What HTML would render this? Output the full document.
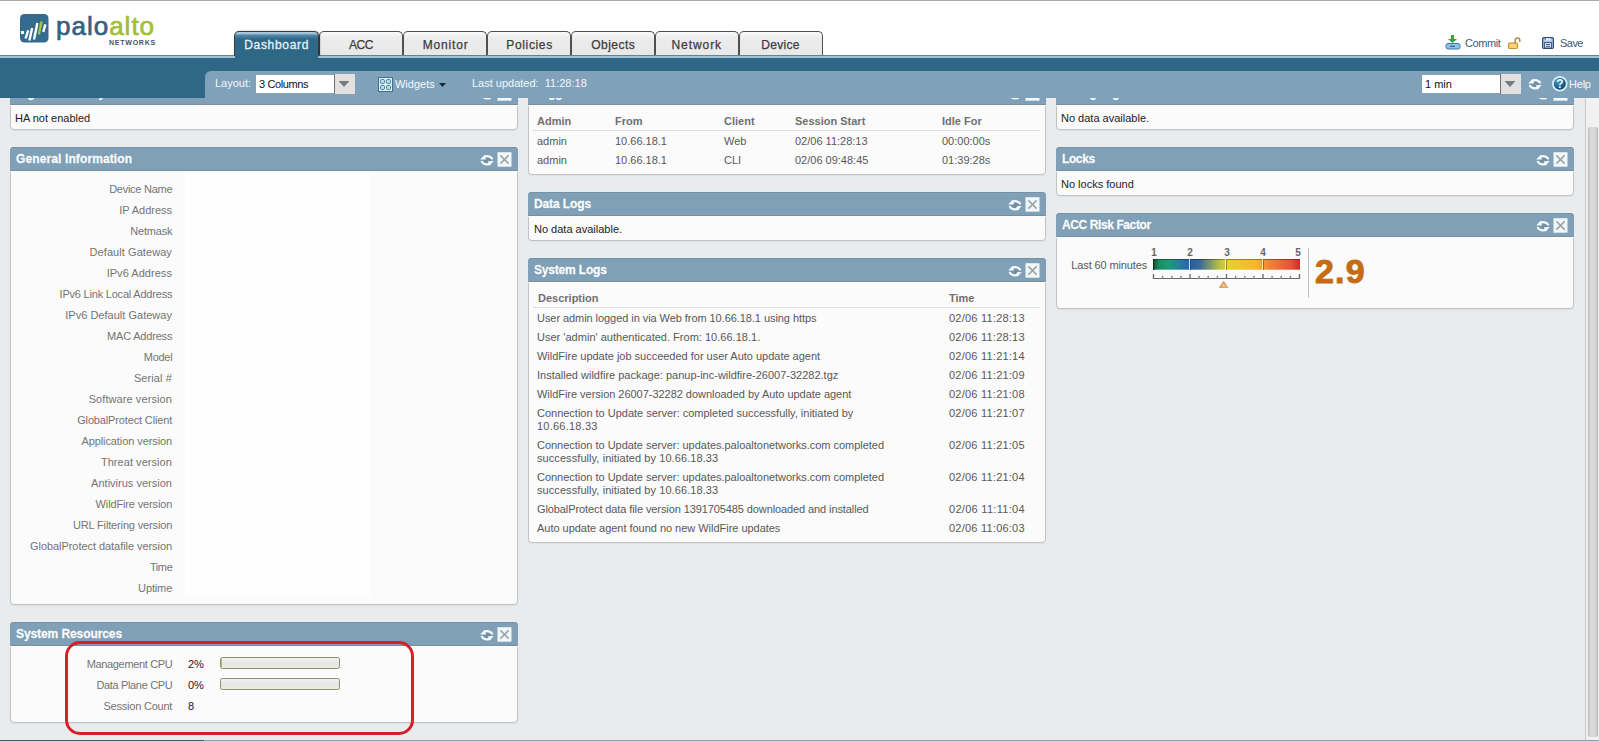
<!DOCTYPE html>
<html><head><meta charset="utf-8"><style>
html,body{margin:0;padding:0;width:1599px;height:741px;overflow:hidden;background:#eaebed;font-family:"Liberation Sans", sans-serif;}
.t{position:absolute;white-space:nowrap;line-height:1;}
.panel{position:absolute;border:1px solid #bfc3c6;border-radius:4px;background:#fbfbfb;box-shadow:0 1px 1px rgba(0,0,0,.05);}
.ph{position:absolute;background:#7fa0b7;border-radius:4px 4px 0 0;box-shadow:inset 0 1px 0 #7790a2, inset 0 -1px 0 #7a8e9c, 0 -1px 0 #e4f0f8, 0 1px 0 #fcfeff;}
.tab{position:absolute;top:31px;width:82px;height:24px;border:1px solid #505050;border-bottom:none;border-radius:5px 5px 0 0;background:linear-gradient(#fbfbfb,#ececec 25%,#e8e8e8);box-sizing:content-box;}
.tab.act{width:83px;background:linear-gradient(#b4cede 0,#9dbdd2 1.5px,#4f86a8 3.5px,#2f6887 7px);border-color:#3a3a3a;height:24px;box-shadow:1px 0 1.5px rgba(0,0,0,.45);z-index:2;}
</style></head><body>
<div id="content">
<div class="panel" style="left:10px;top:81px;width:506px;height:47px;"></div>
<div class="ph" style="left:10px;top:81px;width:508px;height:24px;"></div>
<div class="t" style="top:86.84px;font-size:12px;color:#fbfdff;font-weight:bold;letter-spacing:-0.211px;left:16px;-webkit-text-stroke:0.3px #fbfdff;text-shadow:0 0 1px rgba(60,90,110,.5);">High Availability</div>
<div style="position:absolute;left:480px;top:88px;width:14px;height:13px;line-height:0"><svg width="14" height="13" viewBox="0 0 14 13"><ellipse cx="7" cy="6.3" rx="4" ry="3.2" fill="#6d8a9e" opacity=".7"/><path d="M12.4 5.2 A5.4 4.4 0 0 0 3.6 3.4" fill="none" stroke="#f4fbff" stroke-width="2.3"/><path d="M0.2 5.6 L4.6 0.8 L6 5.4 Z" fill="#f4fbff"/><path d="M1.6 7.2 A5.4 4.4 0 0 0 10.4 9.2" fill="none" stroke="#f4fbff" stroke-width="2.3"/><path d="M13.8 7 L9.4 11.8 L8 7.2 Z" fill="#f4fbff"/></svg></div>
<div style="position:absolute;left:497px;top:86px;width:15px;height:15px;line-height:0"><svg width="15" height="15" viewBox="0 0 15 15"><rect x="0.5" y="0.2" width="14" height="14.5" fill="#f2f7fa"/><path d="M3.4 3.4 L11.6 11.6 M11.6 3.4 L3.4 11.6" stroke="#9ea5aa" stroke-width="1.6"/></svg></div>
<div class="t" style="top:112.69px;font-size:11px;color:#222;left:15px;">HA not enabled</div>
<div class="panel" style="left:10px;top:147px;width:506px;height:456px;"></div>
<div class="ph" style="left:10px;top:147px;width:508px;height:24px;"></div>
<div class="t" style="top:152.84px;font-size:12px;color:#fbfdff;font-weight:bold;letter-spacing:0.115px;left:16px;-webkit-text-stroke:0.3px #fbfdff;text-shadow:0 0 1px rgba(60,90,110,.5);">General Information</div>
<div style="position:absolute;left:480px;top:154px;width:14px;height:13px;line-height:0"><svg width="14" height="13" viewBox="0 0 14 13"><ellipse cx="7" cy="6.3" rx="4" ry="3.2" fill="#6d8a9e" opacity=".7"/><path d="M12.4 5.2 A5.4 4.4 0 0 0 3.6 3.4" fill="none" stroke="#f4fbff" stroke-width="2.3"/><path d="M0.2 5.6 L4.6 0.8 L6 5.4 Z" fill="#f4fbff"/><path d="M1.6 7.2 A5.4 4.4 0 0 0 10.4 9.2" fill="none" stroke="#f4fbff" stroke-width="2.3"/><path d="M13.8 7 L9.4 11.8 L8 7.2 Z" fill="#f4fbff"/></svg></div>
<div style="position:absolute;left:497px;top:152px;width:15px;height:15px;line-height:0"><svg width="15" height="15" viewBox="0 0 15 15"><rect x="0.5" y="0.2" width="14" height="14.5" fill="#f2f7fa"/><path d="M3.4 3.4 L11.6 11.6 M11.6 3.4 L3.4 11.6" stroke="#9ea5aa" stroke-width="1.6"/></svg></div>
<div style="position:absolute;left:185px;top:172px;width:185px;height:425px;background:#fefefe;"></div>
<div class="t" style="top:183.69px;font-size:11px;color:#747474;letter-spacing:-0.263px;right:1426.74px;text-align:right;">Device Name</div>
<div class="t" style="top:204.69px;font-size:11px;color:#747474;letter-spacing:-0.012px;right:1426.99px;text-align:right;">IP Address</div>
<div class="t" style="top:225.69px;font-size:11px;color:#747474;letter-spacing:-0.218px;right:1426.78px;text-align:right;">Netmask</div>
<div class="t" style="top:246.69px;font-size:11px;color:#747474;letter-spacing:0.069px;right:1427.07px;text-align:right;">Default Gateway</div>
<div class="t" style="top:267.69px;font-size:11px;color:#747474;letter-spacing:0.043px;right:1427.04px;text-align:right;">IPv6 Address</div>
<div class="t" style="top:288.69px;font-size:11px;color:#747474;letter-spacing:-0.205px;right:1426.79px;text-align:right;">IPv6 Link Local Address</div>
<div class="t" style="top:309.69px;font-size:11px;color:#747474;letter-spacing:0.016px;right:1427.02px;text-align:right;">IPv6 Default Gateway</div>
<div class="t" style="top:330.69px;font-size:11px;color:#747474;letter-spacing:-0.196px;right:1426.80px;text-align:right;">MAC Address</div>
<div class="t" style="top:351.69px;font-size:11px;color:#747474;letter-spacing:-0.293px;right:1426.71px;text-align:right;">Model</div>
<div class="t" style="top:372.69px;font-size:11px;color:#747474;letter-spacing:0.084px;right:1427.08px;text-align:right;">Serial #</div>
<div class="t" style="top:393.69px;font-size:11px;color:#747474;letter-spacing:0.084px;right:1427.08px;text-align:right;">Software version</div>
<div class="t" style="top:414.69px;font-size:11px;color:#747474;letter-spacing:-0.144px;right:1426.86px;text-align:right;">GlobalProtect Client</div>
<div class="t" style="top:435.69px;font-size:11px;color:#747474;letter-spacing:-0.086px;right:1426.91px;text-align:right;">Application version</div>
<div class="t" style="top:456.69px;font-size:11px;color:#747474;letter-spacing:0.052px;right:1427.05px;text-align:right;">Threat version</div>
<div class="t" style="top:477.69px;font-size:11px;color:#747474;letter-spacing:0.012px;right:1427.01px;text-align:right;">Antivirus version</div>
<div class="t" style="top:498.69px;font-size:11px;color:#747474;letter-spacing:-0.144px;right:1426.86px;text-align:right;">WildFire version</div>
<div class="t" style="top:519.69px;font-size:11px;color:#747474;letter-spacing:-0.150px;right:1426.85px;text-align:right;">URL Filtering version</div>
<div class="t" style="top:540.69px;font-size:11px;color:#747474;letter-spacing:-0.055px;right:1426.94px;text-align:right;">GlobalProtect datafile version</div>
<div class="t" style="top:561.69px;font-size:11px;color:#747474;letter-spacing:-0.382px;right:1426.62px;text-align:right;">Time</div>
<div class="t" style="top:582.69px;font-size:11px;color:#747474;letter-spacing:-0.131px;right:1426.87px;text-align:right;">Uptime</div>
<div class="panel" style="left:10px;top:622px;width:506px;height:99px;"></div>
<div class="ph" style="left:10px;top:622px;width:508px;height:24px;"></div>
<div class="t" style="top:627.84px;font-size:12px;color:#fbfdff;font-weight:bold;letter-spacing:-0.088px;left:16px;-webkit-text-stroke:0.3px #fbfdff;text-shadow:0 0 1px rgba(60,90,110,.5);">System Resources</div>
<div style="position:absolute;left:480px;top:629px;width:14px;height:13px;line-height:0"><svg width="14" height="13" viewBox="0 0 14 13"><ellipse cx="7" cy="6.3" rx="4" ry="3.2" fill="#6d8a9e" opacity=".7"/><path d="M12.4 5.2 A5.4 4.4 0 0 0 3.6 3.4" fill="none" stroke="#f4fbff" stroke-width="2.3"/><path d="M0.2 5.6 L4.6 0.8 L6 5.4 Z" fill="#f4fbff"/><path d="M1.6 7.2 A5.4 4.4 0 0 0 10.4 9.2" fill="none" stroke="#f4fbff" stroke-width="2.3"/><path d="M13.8 7 L9.4 11.8 L8 7.2 Z" fill="#f4fbff"/></svg></div>
<div style="position:absolute;left:497px;top:627px;width:15px;height:15px;line-height:0"><svg width="15" height="15" viewBox="0 0 15 15"><rect x="0.5" y="0.2" width="14" height="14.5" fill="#f2f7fa"/><path d="M3.4 3.4 L11.6 11.6 M11.6 3.4 L3.4 11.6" stroke="#9ea5aa" stroke-width="1.6"/></svg></div>
<div class="t" style="top:658.69px;font-size:11px;color:#747474;letter-spacing:-0.346px;right:1426.65px;text-align:right;">Management CPU</div>
<div class="t" style="top:658.69px;font-size:11px;color:#222;left:188px;">2%</div>
<div class="t" style="top:679.69px;font-size:11px;color:#747474;letter-spacing:-0.340px;right:1426.66px;text-align:right;">Data Plane CPU</div>
<div class="t" style="top:679.69px;font-size:11px;color:#222;left:188px;">0%</div>
<div class="t" style="top:700.69px;font-size:11px;color:#747474;letter-spacing:-0.213px;right:1426.79px;text-align:right;">Session Count</div>
<div class="t" style="top:700.69px;font-size:11px;color:#222;left:188px;">8</div>
<div style="position:absolute;left:220px;top:657px;width:118px;height:10px;border:1px solid #909172;border-radius:2.5px;background:linear-gradient(#eeeff0,#e6e6e2 60%,#ecece6);"></div>
<div style="position:absolute;left:220px;top:678px;width:118px;height:10px;border:1px solid #909172;border-radius:2.5px;background:linear-gradient(#eeeff0,#e6e6e2 60%,#ecece6);"></div>
<div style="position:absolute;left:221px;top:658px;width:1px;height:10px;background:#a8c070;"></div>
<div class="panel" style="left:528px;top:81px;width:516px;height:92px;"></div>
<div class="ph" style="left:528px;top:81px;width:518px;height:24px;"></div>
<div class="t" style="top:86.84px;font-size:12px;color:#fbfdff;font-weight:bold;letter-spacing:-0.209px;left:534px;-webkit-text-stroke:0.3px #fbfdff;text-shadow:0 0 1px rgba(60,90,110,.5);">Logged In Admins</div>
<div style="position:absolute;left:1008px;top:88px;width:14px;height:13px;line-height:0"><svg width="14" height="13" viewBox="0 0 14 13"><ellipse cx="7" cy="6.3" rx="4" ry="3.2" fill="#6d8a9e" opacity=".7"/><path d="M12.4 5.2 A5.4 4.4 0 0 0 3.6 3.4" fill="none" stroke="#f4fbff" stroke-width="2.3"/><path d="M0.2 5.6 L4.6 0.8 L6 5.4 Z" fill="#f4fbff"/><path d="M1.6 7.2 A5.4 4.4 0 0 0 10.4 9.2" fill="none" stroke="#f4fbff" stroke-width="2.3"/><path d="M13.8 7 L9.4 11.8 L8 7.2 Z" fill="#f4fbff"/></svg></div>
<div style="position:absolute;left:1025px;top:86px;width:15px;height:15px;line-height:0"><svg width="15" height="15" viewBox="0 0 15 15"><rect x="0.5" y="0.2" width="14" height="14.5" fill="#f2f7fa"/><path d="M3.4 3.4 L11.6 11.6 M11.6 3.4 L3.4 11.6" stroke="#9ea5aa" stroke-width="1.6"/></svg></div>
<div class="t" style="top:115.69px;font-size:11px;color:#707070;font-weight:bold;left:537px;">Admin</div>
<div class="t" style="top:115.69px;font-size:11px;color:#707070;font-weight:bold;left:615px;">From</div>
<div class="t" style="top:115.69px;font-size:11px;color:#707070;font-weight:bold;left:724px;">Client</div>
<div class="t" style="top:115.69px;font-size:11px;color:#707070;font-weight:bold;left:795px;">Session Start</div>
<div class="t" style="top:115.69px;font-size:11px;color:#707070;font-weight:bold;left:942px;">Idle For</div>
<div style="position:absolute;left:533px;top:130px;width:507px;height:1px;background:#dde0e3;"></div>
<div class="t" style="top:135.69px;font-size:11px;color:#585858;left:537px;">admin</div>
<div class="t" style="top:135.69px;font-size:11px;color:#585858;left:615px;">10.66.18.1</div>
<div class="t" style="top:135.69px;font-size:11px;color:#585858;left:724px;">Web</div>
<div class="t" style="top:135.69px;font-size:11px;color:#585858;left:795px;">02/06 11:28:13</div>
<div class="t" style="top:135.69px;font-size:11px;color:#585858;left:942px;">00:00:00s</div>
<div class="t" style="top:154.69px;font-size:11px;color:#585858;left:537px;">admin</div>
<div class="t" style="top:154.69px;font-size:11px;color:#585858;left:615px;">10.66.18.1</div>
<div class="t" style="top:154.69px;font-size:11px;color:#585858;left:724px;">CLI</div>
<div class="t" style="top:154.69px;font-size:11px;color:#585858;left:795px;">02/06 09:48:45</div>
<div class="t" style="top:154.69px;font-size:11px;color:#585858;left:942px;">01:39:28s</div>
<div class="panel" style="left:528px;top:192px;width:516px;height:47px;"></div>
<div class="ph" style="left:528px;top:192px;width:518px;height:24px;"></div>
<div class="t" style="top:197.84px;font-size:12px;color:#fbfdff;font-weight:bold;letter-spacing:-0.116px;left:534px;-webkit-text-stroke:0.3px #fbfdff;text-shadow:0 0 1px rgba(60,90,110,.5);">Data Logs</div>
<div style="position:absolute;left:1008px;top:199px;width:14px;height:13px;line-height:0"><svg width="14" height="13" viewBox="0 0 14 13"><ellipse cx="7" cy="6.3" rx="4" ry="3.2" fill="#6d8a9e" opacity=".7"/><path d="M12.4 5.2 A5.4 4.4 0 0 0 3.6 3.4" fill="none" stroke="#f4fbff" stroke-width="2.3"/><path d="M0.2 5.6 L4.6 0.8 L6 5.4 Z" fill="#f4fbff"/><path d="M1.6 7.2 A5.4 4.4 0 0 0 10.4 9.2" fill="none" stroke="#f4fbff" stroke-width="2.3"/><path d="M13.8 7 L9.4 11.8 L8 7.2 Z" fill="#f4fbff"/></svg></div>
<div style="position:absolute;left:1025px;top:197px;width:15px;height:15px;line-height:0"><svg width="15" height="15" viewBox="0 0 15 15"><rect x="0.5" y="0.2" width="14" height="14.5" fill="#f2f7fa"/><path d="M3.4 3.4 L11.6 11.6 M11.6 3.4 L3.4 11.6" stroke="#9ea5aa" stroke-width="1.6"/></svg></div>
<div class="t" style="top:223.69px;font-size:11px;color:#222;left:534px;">No data available.</div>
<div class="panel" style="left:528px;top:258px;width:516px;height:283px;"></div>
<div class="ph" style="left:528px;top:258px;width:518px;height:24px;"></div>
<div class="t" style="top:263.84px;font-size:12px;color:#fbfdff;font-weight:bold;letter-spacing:-0.181px;left:534px;-webkit-text-stroke:0.3px #fbfdff;text-shadow:0 0 1px rgba(60,90,110,.5);">System Logs</div>
<div style="position:absolute;left:1008px;top:265px;width:14px;height:13px;line-height:0"><svg width="14" height="13" viewBox="0 0 14 13"><ellipse cx="7" cy="6.3" rx="4" ry="3.2" fill="#6d8a9e" opacity=".7"/><path d="M12.4 5.2 A5.4 4.4 0 0 0 3.6 3.4" fill="none" stroke="#f4fbff" stroke-width="2.3"/><path d="M0.2 5.6 L4.6 0.8 L6 5.4 Z" fill="#f4fbff"/><path d="M1.6 7.2 A5.4 4.4 0 0 0 10.4 9.2" fill="none" stroke="#f4fbff" stroke-width="2.3"/><path d="M13.8 7 L9.4 11.8 L8 7.2 Z" fill="#f4fbff"/></svg></div>
<div style="position:absolute;left:1025px;top:263px;width:15px;height:15px;line-height:0"><svg width="15" height="15" viewBox="0 0 15 15"><rect x="0.5" y="0.2" width="14" height="14.5" fill="#f2f7fa"/><path d="M3.4 3.4 L11.6 11.6 M11.6 3.4 L3.4 11.6" stroke="#9ea5aa" stroke-width="1.6"/></svg></div>
<div class="t" style="top:292.69px;font-size:11px;color:#707070;font-weight:bold;left:538px;">Description</div>
<div class="t" style="top:292.69px;font-size:11px;color:#707070;font-weight:bold;left:949px;">Time</div>
<div style="position:absolute;left:533px;top:307px;width:507px;height:1px;background:#dde0e3;"></div>
<div class="t" style="top:312.69px;font-size:11px;color:#585858;letter-spacing:-0.062px;left:537px;">User admin logged in via Web from 10.66.18.1 using https</div>
<div class="t" style="top:312.69px;font-size:11px;color:#585858;letter-spacing:0.231px;left:949px;">02/06 11:28:13</div>
<div class="t" style="top:331.69px;font-size:11px;color:#585858;letter-spacing:0.016px;left:537px;">User 'admin' authenticated. From: 10.66.18.1.</div>
<div class="t" style="top:331.69px;font-size:11px;color:#585858;letter-spacing:0.231px;left:949px;">02/06 11:28:13</div>
<div class="t" style="top:350.69px;font-size:11px;color:#585858;letter-spacing:-0.012px;left:537px;">WildFire update job succeeded for user Auto update agent</div>
<div class="t" style="top:350.69px;font-size:11px;color:#585858;letter-spacing:0.231px;left:949px;">02/06 11:21:14</div>
<div class="t" style="top:369.69px;font-size:11px;color:#585858;letter-spacing:-0.003px;left:537px;">Installed wildfire package: panup-inc-wildfire-26007-32282.tgz</div>
<div class="t" style="top:369.69px;font-size:11px;color:#585858;letter-spacing:0.231px;left:949px;">02/06 11:21:09</div>
<div class="t" style="top:388.69px;font-size:11px;color:#585858;letter-spacing:-0.032px;left:537px;">WildFire version 26007-32282 downloaded by Auto update agent</div>
<div class="t" style="top:388.69px;font-size:11px;color:#585858;letter-spacing:0.231px;left:949px;">02/06 11:21:08</div>
<div class="t" style="top:407.69px;font-size:11px;color:#585858;letter-spacing:-0.013px;left:537px;">Connection to Update server: completed successfully, initiated by</div>
<div class="t" style="top:420.69px;font-size:11px;color:#585858;letter-spacing:0.238px;left:537px;">10.66.18.33</div>
<div class="t" style="top:407.69px;font-size:11px;color:#585858;letter-spacing:0.231px;left:949px;">02/06 11:21:07</div>
<div class="t" style="top:439.69px;font-size:11px;color:#585858;letter-spacing:-0.022px;left:537px;">Connection to Update server: updates.paloaltonetworks.com completed</div>
<div class="t" style="top:452.69px;font-size:11px;color:#585858;letter-spacing:0.074px;left:537px;">successfully, initiated by 10.66.18.33</div>
<div class="t" style="top:439.69px;font-size:11px;color:#585858;letter-spacing:0.231px;left:949px;">02/06 11:21:05</div>
<div class="t" style="top:471.69px;font-size:11px;color:#585858;letter-spacing:-0.022px;left:537px;">Connection to Update server: updates.paloaltonetworks.com completed</div>
<div class="t" style="top:484.69px;font-size:11px;color:#585858;letter-spacing:0.074px;left:537px;">successfully, initiated by 10.66.18.33</div>
<div class="t" style="top:471.69px;font-size:11px;color:#585858;letter-spacing:0.231px;left:949px;">02/06 11:21:04</div>
<div class="t" style="top:503.69px;font-size:11px;color:#585858;letter-spacing:-0.099px;left:537px;">GlobalProtect data file version 1391705485 downloaded and installed</div>
<div class="t" style="top:503.69px;font-size:11px;color:#585858;letter-spacing:0.294px;left:949px;">02/06 11:11:04</div>
<div class="t" style="top:522.69px;font-size:11px;color:#585858;letter-spacing:-0.027px;left:537px;">Auto update agent found no new WildFire updates</div>
<div class="t" style="top:522.69px;font-size:11px;color:#585858;letter-spacing:0.231px;left:949px;">02/06 11:06:03</div>
<div class="panel" style="left:1056px;top:81px;width:516px;height:47px;"></div>
<div class="ph" style="left:1056px;top:81px;width:518px;height:24px;"></div>
<div class="t" style="top:86.84px;font-size:12px;color:#fbfdff;font-weight:bold;letter-spacing:-0.641px;left:1062px;-webkit-text-stroke:0.3px #fbfdff;text-shadow:0 0 1px rgba(60,90,110,.5);">Config Logs</div>
<div style="position:absolute;left:1536px;top:88px;width:14px;height:13px;line-height:0"><svg width="14" height="13" viewBox="0 0 14 13"><ellipse cx="7" cy="6.3" rx="4" ry="3.2" fill="#6d8a9e" opacity=".7"/><path d="M12.4 5.2 A5.4 4.4 0 0 0 3.6 3.4" fill="none" stroke="#f4fbff" stroke-width="2.3"/><path d="M0.2 5.6 L4.6 0.8 L6 5.4 Z" fill="#f4fbff"/><path d="M1.6 7.2 A5.4 4.4 0 0 0 10.4 9.2" fill="none" stroke="#f4fbff" stroke-width="2.3"/><path d="M13.8 7 L9.4 11.8 L8 7.2 Z" fill="#f4fbff"/></svg></div>
<div style="position:absolute;left:1553px;top:86px;width:15px;height:15px;line-height:0"><svg width="15" height="15" viewBox="0 0 15 15"><rect x="0.5" y="0.2" width="14" height="14.5" fill="#f2f7fa"/><path d="M3.4 3.4 L11.6 11.6 M11.6 3.4 L3.4 11.6" stroke="#9ea5aa" stroke-width="1.6"/></svg></div>
<div class="t" style="top:112.69px;font-size:11px;color:#222;left:1061px;">No data available.</div>
<div class="panel" style="left:1056px;top:147px;width:516px;height:47px;"></div>
<div class="ph" style="left:1056px;top:147px;width:518px;height:24px;"></div>
<div class="t" style="top:152.84px;font-size:12px;color:#fbfdff;font-weight:bold;letter-spacing:-0.401px;left:1062px;-webkit-text-stroke:0.3px #fbfdff;text-shadow:0 0 1px rgba(60,90,110,.5);">Locks</div>
<div style="position:absolute;left:1536px;top:154px;width:14px;height:13px;line-height:0"><svg width="14" height="13" viewBox="0 0 14 13"><ellipse cx="7" cy="6.3" rx="4" ry="3.2" fill="#6d8a9e" opacity=".7"/><path d="M12.4 5.2 A5.4 4.4 0 0 0 3.6 3.4" fill="none" stroke="#f4fbff" stroke-width="2.3"/><path d="M0.2 5.6 L4.6 0.8 L6 5.4 Z" fill="#f4fbff"/><path d="M1.6 7.2 A5.4 4.4 0 0 0 10.4 9.2" fill="none" stroke="#f4fbff" stroke-width="2.3"/><path d="M13.8 7 L9.4 11.8 L8 7.2 Z" fill="#f4fbff"/></svg></div>
<div style="position:absolute;left:1553px;top:152px;width:15px;height:15px;line-height:0"><svg width="15" height="15" viewBox="0 0 15 15"><rect x="0.5" y="0.2" width="14" height="14.5" fill="#f2f7fa"/><path d="M3.4 3.4 L11.6 11.6 M11.6 3.4 L3.4 11.6" stroke="#9ea5aa" stroke-width="1.6"/></svg></div>
<div class="t" style="top:178.69px;font-size:11px;color:#222;left:1061px;">No locks found</div>
<div class="panel" style="left:1056px;top:213px;width:516px;height:94px;"></div>
<div class="ph" style="left:1056px;top:213px;width:518px;height:24px;"></div>
<div class="t" style="top:218.84px;font-size:12px;color:#fbfdff;font-weight:bold;letter-spacing:-0.401px;left:1062px;-webkit-text-stroke:0.3px #fbfdff;text-shadow:0 0 1px rgba(60,90,110,.5);">ACC Risk Factor</div>
<div style="position:absolute;left:1536px;top:220px;width:14px;height:13px;line-height:0"><svg width="14" height="13" viewBox="0 0 14 13"><ellipse cx="7" cy="6.3" rx="4" ry="3.2" fill="#6d8a9e" opacity=".7"/><path d="M12.4 5.2 A5.4 4.4 0 0 0 3.6 3.4" fill="none" stroke="#f4fbff" stroke-width="2.3"/><path d="M0.2 5.6 L4.6 0.8 L6 5.4 Z" fill="#f4fbff"/><path d="M1.6 7.2 A5.4 4.4 0 0 0 10.4 9.2" fill="none" stroke="#f4fbff" stroke-width="2.3"/><path d="M13.8 7 L9.4 11.8 L8 7.2 Z" fill="#f4fbff"/></svg></div>
<div style="position:absolute;left:1553px;top:218px;width:15px;height:15px;line-height:0"><svg width="15" height="15" viewBox="0 0 15 15"><rect x="0.5" y="0.2" width="14" height="14.5" fill="#f2f7fa"/><path d="M3.4 3.4 L11.6 11.6 M11.6 3.4 L3.4 11.6" stroke="#9ea5aa" stroke-width="1.6"/></svg></div>
<div class="t" style="top:259.69px;font-size:11px;color:#585858;letter-spacing:-0.119px;right:451.88px;text-align:right;">Last 60 minutes</div>
<div style="position:absolute;left:1153px;top:259px;width:147px;height:11px;background:linear-gradient(90deg,#0f4a30 0%,#17905e 4%,#1f9a7a 11%,#2a6ab0 23%,#2a5ea4 26%,#3a6a98 32%,#b8c040 45%,#e8d028 51%,#f5b828 70%,#f59a30 75%,#f08838 78%,#e85038 94%,#d02828 100%);box-shadow:inset 0 1px 0 rgba(0,0,0,.35), inset 0 -1px 0 rgba(255,255,255,.3)"></div>
<div style="position:absolute;left:1189px;top:259px;width:1px;height:11px;background:#c8e8ff;"></div>
<div style="position:absolute;left:1190px;top:259px;width:1px;height:11px;background:#1f4c78;opacity:.8;"></div>
<div style="position:absolute;left:1225px;top:259px;width:1px;height:11px;background:#fff8b0;"></div>
<div style="position:absolute;left:1226px;top:259px;width:1px;height:11px;background:#8a7a18;opacity:.8;"></div>
<div style="position:absolute;left:1262px;top:259px;width:1px;height:11px;background:#ffe8b8;"></div>
<div style="position:absolute;left:1263px;top:259px;width:1px;height:11px;background:#9a5a18;opacity:.8;"></div>
<div style="position:absolute;left:1153px;top:259px;width:1px;height:11px;background:#0a2a1a;"></div>
<div class="t" style="top:247.53px;font-size:10px;color:#666;font-weight:bold;left:954px;width:400px;text-align:center;">1</div>
<div class="t" style="top:247.53px;font-size:10px;color:#666;font-weight:bold;left:990px;width:400px;text-align:center;">2</div>
<div class="t" style="top:247.53px;font-size:10px;color:#666;font-weight:bold;left:1027px;width:400px;text-align:center;">3</div>
<div class="t" style="top:247.53px;font-size:10px;color:#666;font-weight:bold;left:1063px;width:400px;text-align:center;">4</div>
<div class="t" style="top:247.53px;font-size:10px;color:#666;font-weight:bold;left:1098px;width:400px;text-align:center;">5</div>
<svg style="position:absolute;left:1150px;top:271px" width="155" height="10"><path d="M3.5 7.5 H149.5" stroke="#666" stroke-width="1.2"/><path d="M3.5 3 V8" stroke="#707070" stroke-width="1.4"/><path d="M40.0 3 V8" stroke="#707070" stroke-width="1.4"/><path d="M76.5 3 V8" stroke="#707070" stroke-width="1.4"/><path d="M113.0 3 V8" stroke="#707070" stroke-width="1.4"/><path d="M149.5 3 V8" stroke="#707070" stroke-width="1.4"/><path d="M12.6 4.8 V8" stroke="#858585" stroke-width="1.4"/><path d="M21.8 4.8 V8" stroke="#858585" stroke-width="1.4"/><path d="M30.9 4.8 V8" stroke="#858585" stroke-width="1.4"/><path d="M49.1 4.8 V8" stroke="#858585" stroke-width="1.4"/><path d="M58.2 4.8 V8" stroke="#858585" stroke-width="1.4"/><path d="M67.4 4.8 V8" stroke="#858585" stroke-width="1.4"/><path d="M85.6 4.8 V8" stroke="#858585" stroke-width="1.4"/><path d="M94.8 4.8 V8" stroke="#858585" stroke-width="1.4"/><path d="M103.9 4.8 V8" stroke="#858585" stroke-width="1.4"/><path d="M122.1 4.8 V8" stroke="#858585" stroke-width="1.4"/><path d="M131.2 4.8 V8" stroke="#858585" stroke-width="1.4"/><path d="M140.4 4.8 V8" stroke="#858585" stroke-width="1.4"/></svg>
<svg style="position:absolute;left:1219px;top:281px" width="10" height="7"><path d="M4.6 0.3 L8.8 6.6 L0.4 6.6 Z" fill="#e0a060" stroke="#c88440" stroke-width="0.6"/><path d="M4.6 2.6 L6.6 5.8 L2.6 5.8 Z" fill="#f4d0a0"/></svg>
<div style="position:absolute;left:1308px;top:248px;width:1px;height:50px;background:#c0c0c0;"></div>
<div class="t" style="top:254.22px;font-size:34px;color:#c46c12;font-weight:bold;left:1315px;letter-spacing:1.2px;-webkit-text-stroke:0.9px #c46c12;">2.9</div>
</div>
<div style="position:absolute;left:0px;top:0px;width:1599px;height:1px;background:#a9a9a9;"></div>
<div style="position:absolute;left:0px;top:1px;width:1599px;height:54px;background:#fff;"></div>
<svg style="position:absolute;left:20px;top:14px" width="29" height="29" viewBox="0 0 29 29"><rect x="0" y="0" width="28.5" height="28.5" rx="4.5" fill="#346b8e"/>
<g stroke-width="2.4" stroke-linecap="butt">
<path d="M1 18.8 L4 18.2" stroke="#fff" stroke-width="3"/>
<path d="M5.6 24.5 L8.2 16.3" stroke="#fff"/>
<path d="M9.4 26.6 L12.2 14" stroke="#fff"/>
<path d="M14 25.6 L17.4 9" stroke="#fff"/>
<path d="M18.8 20.6 L21.6 7.5" stroke="#a9c23f"/>
<path d="M23.3 17.8 L25.4 10.4" stroke="#fff"/>
</g></svg>
<div class="t" style="top:13.49px;font-size:26px;color:#444;left:56px;letter-spacing:1.0px;-webkit-text-stroke:0.7px;"><span style="color:#36617f">palo</span><span style="color:#a3bd3b">alto</span></div>
<div class="t" style="top:39.47px;font-size:7px;color:#3a5670;font-weight:bold;letter-spacing:0.757px;left:109px;">NETWORKS</div>
<div class="tab act" style="left:234px;"></div>
<div style="position:absolute;left:235px;top:54px;width:83px;height:4px;background:#2f6887;z-index:2"></div>
<div class="t" style="top:38.64px;font-size:12px;color:#e4f3fa;letter-spacing:0.684px;left:244.2px;z-index:3;-webkit-text-stroke:0.3px #e4f3fa;">Dashboard</div>
<div class="tab" style="left:319px;"></div>
<div class="t" style="top:38.64px;font-size:12px;color:#3c3c3c;letter-spacing:-0.478px;left:349px;-webkit-text-stroke:0.25px #3c3c3c;">ACC</div>
<div class="tab" style="left:403px;"></div>
<div class="t" style="top:38.64px;font-size:12px;color:#3c3c3c;letter-spacing:0.811px;left:422.8px;-webkit-text-stroke:0.25px #3c3c3c;">Monitor</div>
<div class="tab" style="left:487px;"></div>
<div class="t" style="top:38.64px;font-size:12px;color:#3c3c3c;letter-spacing:0.647px;left:506.3px;-webkit-text-stroke:0.25px #3c3c3c;">Policies</div>
<div class="tab" style="left:571px;"></div>
<div class="t" style="top:38.64px;font-size:12px;color:#3c3c3c;letter-spacing:0.500px;left:591.2px;-webkit-text-stroke:0.25px #3c3c3c;">Objects</div>
<div class="tab" style="left:655px;"></div>
<div class="t" style="top:38.64px;font-size:12px;color:#3c3c3c;letter-spacing:0.928px;left:671.5px;-webkit-text-stroke:0.25px #3c3c3c;">Network</div>
<div class="tab" style="left:739px;"></div>
<div class="t" style="top:38.64px;font-size:12px;color:#3c3c3c;letter-spacing:0.320px;left:761.2px;-webkit-text-stroke:0.25px #3c3c3c;">Device</div>
<svg style="position:absolute;left:1445px;top:35px" width="16" height="15" viewBox="0 0 16 15"><path d="M6 0 H9 V4 H12 L7.5 8 L3 4 H6 Z" fill="#3aa040"/><rect x="1" y="8.5" width="14" height="5.5" rx="2" fill="#8fc3e6" stroke="#3f79a8"/><path d="M5 11.3 H10" stroke="#2f5f88" stroke-width="1.2"/></svg>
<div class="t" style="top:37.69px;font-size:11px;color:#3b5d7c;letter-spacing:-0.420px;left:1465px;">Commit</div>
<svg style="position:absolute;left:1507px;top:36px" width="14" height="13" viewBox="0 0 14 13"><path d="M8.2 7 V4.2 A2.3 2.3 0 0 1 12.8 4.2 V6" fill="none" stroke="#b88a3a" stroke-width="1.5"/><rect x="1.5" y="7" width="9" height="5.6" rx="0.8" fill="#f0c050" stroke="#c08a20" stroke-width="1"/><path d="M2.5 9 H9.5 M2.5 11 H9.5" stroke="#fff0b0" stroke-width="0.9"/></svg>
<svg style="position:absolute;left:1542px;top:37px" width="12" height="12" viewBox="0 0 12 12"><rect x="0.6" y="0.6" width="10.8" height="10.8" rx="1.2" fill="#a8c4e8" stroke="#2b4a72" stroke-width="1.2"/><rect x="3" y="1" width="5.5" height="2.6" fill="#d8e8f8"/><path d="M3.5 1.2 V2.6" stroke="#2b4a72" stroke-width="0.9"/><rect x="2.6" y="5.6" width="6.8" height="5.4" fill="#f4f8fc" stroke="#2b4a72" stroke-width="0.9"/><path d="M3.8 7.4 H8.2 M3.8 9.3 H8.2" stroke="#2b4a72" stroke-width="1"/></svg>
<div class="t" style="top:37.69px;font-size:11px;color:#3b5d7c;letter-spacing:-0.528px;left:1560px;">Save</div>
<div style="position:absolute;left:0px;top:55px;width:1599px;height:1px;background:#6f7f8a;"></div>
<div style="position:absolute;left:0px;top:56px;width:1599px;height:2px;background:#a3c3d9;"></div>
<div style="position:absolute;left:0px;top:58px;width:1599px;height:40px;background:#2f6887;"></div>
<div style="position:absolute;left:205px;top:71px;width:1394px;height:27px;background:#7fa1b9;border-top-left-radius:6px;"></div>
<div class="t" style="top:77.69px;font-size:11px;color:#f4f8fb;left:215px;">Layout:</div>
<div style="position:absolute;left:256px;top:75px;width:78px;height:18px;background:#fff;"></div>
<div class="t" style="top:78.69px;font-size:11px;color:#111;letter-spacing:-0.374px;left:259px;">3 Columns</div>
<div style="position:absolute;left:334px;top:74px;width:20px;height:20px;background:#e2e1df;border-left:1px solid #707070;"></div>
<svg style="position:absolute;left:338px;top:80px" width="12" height="8"><path d="M0.5 1 H11.5 L6 7 Z" fill="#737b83"/></svg>
<svg style="position:absolute;left:378px;top:77px" width="15" height="15" viewBox="0 0 15 15"><rect x="0.5" y="0.5" width="14" height="14" fill="#d6f2fb" stroke="#3f6f8c"/><g fill="#b8dfeb" stroke="#507c91" stroke-width="1"><rect x="2.5" y="2.5" width="4" height="4" rx="1.2"/><rect x="8.5" y="2.5" width="4" height="4" rx="1.2"/><rect x="2.5" y="8.5" width="4" height="4" rx="1.2"/><rect x="8.5" y="8.5" width="4" height="4" rx="1.2"/></g></svg>
<div class="t" style="top:79.39px;font-size:11px;color:#f4f8fb;letter-spacing:-0.008px;left:395px;">Widgets</div>
<svg style="position:absolute;left:439px;top:83px" width="7" height="4"><path d="M0 0 H7 L3.5 4 Z" fill="#10283a"/></svg>
<div class="t" style="top:77.69px;font-size:11px;color:#f4f8fb;left:472px;">Last updated:&nbsp; 11:28:18</div>
<div style="position:absolute;left:1422px;top:75px;width:78px;height:18px;background:#fff;"></div>
<div class="t" style="top:78.69px;font-size:11px;color:#111;left:1425px;">1 min</div>
<div style="position:absolute;left:1500px;top:74px;width:20px;height:20px;background:#e2e1df;border-left:1px solid #707070;"></div>
<svg style="position:absolute;left:1504px;top:80px" width="12" height="8"><path d="M0.5 1 H11.5 L6 7 Z" fill="#737b83"/></svg>
<div style="position:absolute;left:1528px;top:78px;width:14px;height:13px;line-height:0"><svg width="14" height="13" viewBox="0 0 14 13"><ellipse cx="7" cy="6.3" rx="4" ry="3.2" fill="#6d8a9e" opacity=".7"/><path d="M12.4 5.2 A5.4 4.4 0 0 0 3.6 3.4" fill="none" stroke="#f4fbff" stroke-width="2.3"/><path d="M0.2 5.6 L4.6 0.8 L6 5.4 Z" fill="#f4fbff"/><path d="M1.6 7.2 A5.4 4.4 0 0 0 10.4 9.2" fill="none" stroke="#f4fbff" stroke-width="2.3"/><path d="M13.8 7 L9.4 11.8 L8 7.2 Z" fill="#f4fbff"/></svg></div>
<svg style="position:absolute;left:1551px;top:75px" width="18" height="18" viewBox="0 0 18 18"><defs><radialGradient id="hg" cx="0.35" cy="0.3" r="0.8"><stop offset="0" stop-color="#5a9cc8"/><stop offset="0.55" stop-color="#1d5f8e"/><stop offset="1" stop-color="#0e4570"/></radialGradient></defs><circle cx="8.8" cy="8.8" r="6.9" fill="url(#hg)" stroke="#d4f2ff" stroke-width="1.7"/><text x="8.9" y="13.2" text-anchor="middle" font-family="Liberation Sans" font-weight="bold" font-size="12" fill="#e8f6ff">?</text></svg>
<div class="t" style="top:79.49px;font-size:11px;color:#f4f8fb;letter-spacing:-0.211px;left:1569px;">Help</div>
<div style="position:absolute;left:1585px;top:98px;width:14px;height:642px;background:#f1f1f1;border-left:1px solid #c9c9c9;box-sizing:border-box;"></div>
<div style="position:absolute;left:1588px;top:127px;width:10px;height:610px;background:linear-gradient(90deg,#b8b8b8,#dadada 25%,#d6d6d6 75%,#b4b4b4);border-radius:2px;"></div>
<div style="position:absolute;left:0px;top:740px;width:204px;height:1px;background:#3b5c6f;"></div>
<div style="position:absolute;left:204px;top:740px;width:1395px;height:1px;background:#8aa2b2;"></div>
<div style="position:absolute;left:65px;top:641px;width:343px;height:88px;border:3px solid #d42027;border-radius:15px;"></div>
</body></html>
